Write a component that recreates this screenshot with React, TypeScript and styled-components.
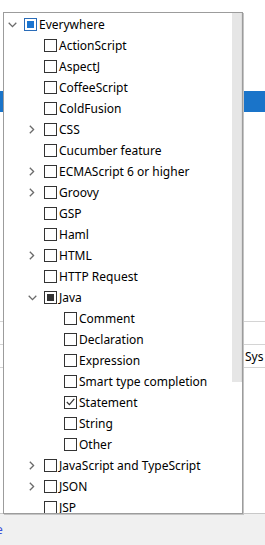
import * as React from "react";
import styled, { createGlobalStyle } from "styled-components";

const GlobalStyle = createGlobalStyle`
  body {
    margin: 0;
    font-family: "Noto Sans", "Liberation Sans", sans-serif;
    font-size: 12px;
    color: #000;
  }
`;

const Screen = styled.div`
  position: relative;
  width: 265px;
  height: 545px;
  overflow: hidden;
  background: #fff;
  display: flex;
  flex-direction: column;
`;

const Page = styled.div`
  flex: 1;
  display: flex;
  flex-direction: column;
`;

const SelectedBand = styled.div`
  margin-top: 91px;
  height: 21px;
  background: #1a74c9;
`;

const TableRow = styled.div<{ $top?: boolean }>`
  height: 22px;
  border-bottom: 1px solid #d4d4d4;
  border-top: ${(p) => (p.$top ? "1px solid #d4d4d4" : "none")};
  display: flex;
  align-items: center;
  padding-left: 245px;
  font-size: 12px;
  white-space: nowrap;
`;

const TableArea = styled.div`
  margin-top: 209px;
`;

const Footer = styled.div`
  height: 31px;
  background: #f0f0f0;
  border-top: 1px solid #c8c8c8;
  display: flex;
  align-items: center;
`;

const CutLink = styled.span`
  color: #3b4fd6;
  margin-left: -4px;
  font-size: 12px;
`;

const Popup = styled.div`
  position: absolute;
  left: 3px;
  top: 12px;
  width: 238px;
  height: 500px;
  background: #fff;
  border: 1px solid #9c9c9c;
  box-shadow: 1px 1px 0 #c4c4c4;
  display: flex;
  overflow: hidden;
`;

const Tree = styled.div`
  flex: 1;
  display: flex;
  flex-direction: column;
  overflow: hidden;
  padding-top: 1px;
`;

const Row = styled.div<{ $level: number }>`
  height: 21px;
  flex: none;
  display: flex;
  align-items: center;
  padding-left: ${(p) => p.$level * 20}px;
  white-space: nowrap;
`;

const Arrow = styled.span`
  width: 16px;
  height: 21px;
  margin-right: 4px;
  display: flex;
  align-items: center;
  justify-content: center;
  flex: none;
`;

const Box = styled.span<{ $blue?: boolean }>`
  width: 11px;
  height: 11px;
  margin-top: -1px;
  border: 1px solid ${(p) => (p.$blue ? "#2a6cb8" : "#333")};
  display: flex;
  align-items: center;
  justify-content: center;
  flex: none;
  background: #fff;
`;

const Fill = styled.span<{ $color: string }>`
  width: 7px;
  height: 7px;
  background: ${(p) => p.$color};
`;

const Label = styled.span`
  margin-left: 2px;
  line-height: 21px;
`;

const Scrollbar = styled.div`
  width: 10px;
  flex: none;
  display: flex;
  flex-direction: column;
`;

const Thumb = styled.div`
  height: 369px;
  background: #e6e6e6;
  border-right: 1px solid #dcdcdc;
`;

type State = "none" | "partial" | "partialDark" | "checked";
type Node = { label: string; level: number; arrow?: "down" | "right"; state?: State };

const nodes: Node[] = [
  { label: "Everywhere", level: 0, arrow: "down", state: "partial" },
  { label: "ActionScript", level: 1 },
  { label: "AspectJ", level: 1 },
  { label: "CoffeeScript", level: 1 },
  { label: "ColdFusion", level: 1 },
  { label: "CSS", level: 1, arrow: "right" },
  { label: "Cucumber feature", level: 1 },
  { label: "ECMAScript 6 or higher", level: 1, arrow: "right" },
  { label: "Groovy", level: 1, arrow: "right" },
  { label: "GSP", level: 1 },
  { label: "Haml", level: 1 },
  { label: "HTML", level: 1, arrow: "right" },
  { label: "HTTP Request", level: 1 },
  { label: "Java", level: 1, arrow: "down", state: "partialDark" },
  { label: "Comment", level: 2 },
  { label: "Declaration", level: 2 },
  { label: "Expression", level: 2 },
  { label: "Smart type completion", level: 2 },
  { label: "Statement", level: 2, state: "checked" },
  { label: "String", level: 2 },
  { label: "Other", level: 2 },
  { label: "JavaScript and TypeScript", level: 1, arrow: "right" },
  { label: "JSON", level: 1, arrow: "right" },
  { label: "JSP", level: 1 },
];

const Chevron = ({ dir }: { dir: "down" | "right" }) =>
  dir === "down" ? (
    <svg width="9" height="6" viewBox="0 0 9 6">
      <path d="M0.7 0.8 L4.5 4.6 L8.3 0.8" fill="none" stroke="#6b6b6b" strokeWidth="1.3" />
    </svg>
  ) : (
    <svg width="6" height="9" viewBox="0 0 6 9">
      <path d="M0.8 0.7 L4.6 4.5 L0.8 8.3" fill="none" stroke="#6b6b6b" strokeWidth="1.3" />
    </svg>
  );

const CheckBox = ({ state = "none" }: { state?: State }) => (
  <Box $blue={state === "partial"}>
    {state === "partial" && <Fill $color="#1a74d0" />}
    {state === "partialDark" && <Fill $color="#333" />}
    {state === "checked" && (
      <svg width="9" height="8" viewBox="0 0 9 8">
        <path d="M0.8 4 L3.4 6.6 L8.3 0.8" fill="none" stroke="#333" strokeWidth="1.2" />
      </svg>
    )}
  </Box>
);

const App = () => (
  <Screen>
    <GlobalStyle />
    <Page>
      <SelectedBand />
      <TableArea>
        <TableRow $top />
        <TableRow>Sys</TableRow>
      </TableArea>
    </Page>
    <Footer>
      <CutLink>e</CutLink>
    </Footer>
    <Popup>
      <Tree>
        {nodes.map((n) => (
          <Row key={n.label} $level={n.level}>
            <Arrow>{n.arrow && <Chevron dir={n.arrow} />}</Arrow>
            <CheckBox state={n.state} />
            <Label>{n.label}</Label>
          </Row>
        ))}
      </Tree>
      <Scrollbar>
        <Thumb />
      </Scrollbar>
    </Popup>
  </Screen>
);

export default App;
